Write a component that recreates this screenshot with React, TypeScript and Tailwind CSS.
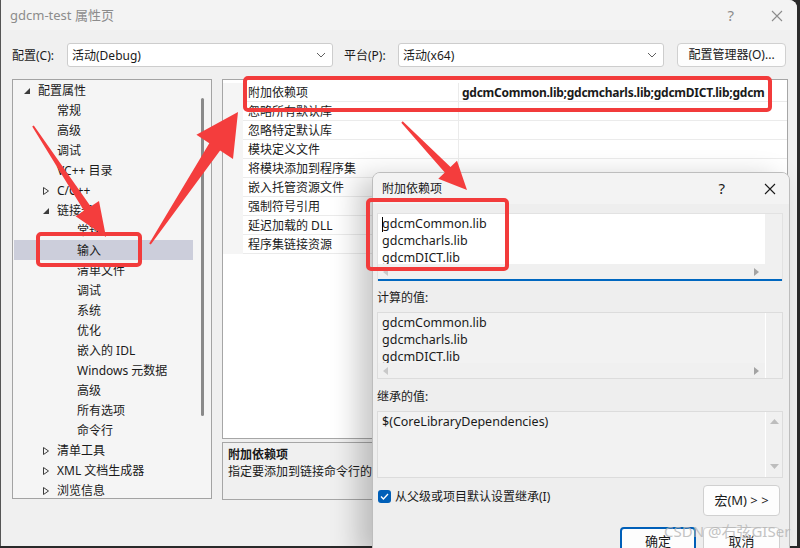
import React from 'react';

type TreeItem = { label: string; level: 0 | 1 | 2; tri?: 'open' | 'closed'; selected?: boolean };

const tree: TreeItem[] = [
  { label: '配置属性', level: 0, tri: 'open' },
  { label: '常规', level: 1 },
  { label: '高级', level: 1 },
  { label: '调试', level: 1 },
  { label: 'VC++ 目录', level: 1 },
  { label: 'C/C++', level: 1, tri: 'closed' },
  { label: '链接器', level: 1, tri: 'open' },
  { label: '常规', level: 2 },
  { label: '输入', level: 2, selected: true },
  { label: '清单文件', level: 2 },
  { label: '调试', level: 2 },
  { label: '系统', level: 2 },
  { label: '优化', level: 2 },
  { label: '嵌入的 IDL', level: 2 },
  { label: 'Windows 元数据', level: 2 },
  { label: '高级', level: 2 },
  { label: '所有选项', level: 2 },
  { label: '命令行', level: 2 },
  { label: '清单工具', level: 1, tri: 'closed' },
  { label: 'XML 文档生成器', level: 1, tri: 'closed' },
  { label: '浏览信息', level: 1, tri: 'closed' },
];

const props = [
  '附加依赖项',
  '忽略所有默认库',
  '忽略特定默认库',
  '模块定义文件',
  '将模块添加到程序集',
  '嵌入托管资源文件',
  '强制符号引用',
  '延迟加载的 DLL',
  '程序集链接资源',
];

const libs = ['gdcmCommon.lib', 'gdcmcharls.lib', 'gdcmDICT.lib'];

// tapered arrow polygon, tail -> tip
function arrow(tx: number, ty: number, px: number, py: number, w0: number, w1: number, hl: number, hw: number) {
  const dx = px - tx;
  const dy = py - ty;
  const len = Math.hypot(dx, dy);
  const ux = dx / len;
  const uy = dy / len;
  const nx = -uy;
  const ny = ux;
  const bx = px - ux * hl;
  const by = py - uy * hl;
  const pts = [
    [tx + (nx * w0) / 2, ty + (ny * w0) / 2],
    [bx + (nx * w1) / 2, by + (ny * w1) / 2],
    [bx + (nx * hw) / 2, by + (ny * hw) / 2],
    [px, py],
    [bx - (nx * hw) / 2, by - (ny * hw) / 2],
    [bx - (nx * w1) / 2, by - (ny * w1) / 2],
    [tx - (nx * w0) / 2, ty - (ny * w0) / 2],
  ];
  return pts.map((p) => p.map((v) => v.toFixed(1)).join(',')).join(' ');
}

function Chevron() {
  return (
    <svg width="10" height="6" viewBox="0 0 10 6" className="shrink-0">
      <path d="M1 1 L5 5 L9 1" fill="none" stroke="#606060" strokeWidth="1" />
    </svg>
  );
}

function CloseX({ color }: { color: string }) {
  return (
    <svg width="12" height="12" viewBox="0 0 12 12">
      <path d="M1 1 L11 11 M11 1 L1 11" stroke={color} strokeWidth="1.1" />
    </svg>
  );
}

function Tri({ kind }: { kind?: 'open' | 'closed' }) {
  if (kind === 'open')
    return (
      <svg width="6" height="6" viewBox="0 0 6 6">
        <path d="M6 0 L6 6 L0 6 Z" fill="#3c3c3c" />
      </svg>
    );
  if (kind === 'closed')
    return (
      <svg width="6" height="8" viewBox="0 0 6 8">
        <path d="M0.5 0.5 L5.5 4 L0.5 7.5 Z" fill="none" stroke="#3c3c3c" strokeWidth="1" />
      </svg>
    );
  return null;
}

function ArrowL({ c }: { c: string }) {
  return (
    <svg width="5" height="8" viewBox="0 0 5 8">
      <path d="M5 0 L0 4 L5 8 Z" fill={c} />
    </svg>
  );
}
function ArrowR({ c }: { c: string }) {
  return (
    <svg width="5" height="8" viewBox="0 0 5 8">
      <path d="M0 0 L5 4 L0 8 Z" fill={c} />
    </svg>
  );
}
function ArrowU({ c }: { c: string }) {
  return (
    <svg width="9" height="5" viewBox="0 0 9 5">
      <path d="M0 5 L4.5 0 L9 5 Z" fill={c} />
    </svg>
  );
}
function ArrowD({ c }: { c: string }) {
  return (
    <svg width="9" height="5" viewBox="0 0 9 5">
      <path d="M0 0 L4.5 5 L9 0 Z" fill={c} />
    </svg>
  );
}

export default function App() {
  return (
    <div className="relative w-[800px] h-[548px] overflow-hidden bg-[#2a2a2a] font-[family-name:Noto_Sans,Noto_Sans_CJK_SC,sans-serif] text-[#1a1a1a]">
      {/* main property window */}
      <div className="w-[797px] h-[546px] bg-[#f0f0f0] border-l border-[#555] rounded-tr-[8px] flex flex-col">
        <div className="h-[30px] pt-[1px] bg-[#f3f3f3] rounded-tr-[8px] flex items-center pl-[9px] text-[13px] text-[#8c8c8c]">
          <span>gdcm-test 属性页</span>
          <div className="ml-auto flex items-center">
            <span className="text-[15px] mr-[37px]">?</span>
            <span className="mr-[14px]">
              <CloseX color="#8c8c8c" />
            </span>
          </div>
        </div>

        {/* configuration row */}
        <div className="mt-[13px] h-[24px] flex items-center pl-[11px] text-[12px]">
          <span className="w-[55px] pt-[1px]">配置(C):</span>
          <div className="w-[266px] h-[24px] bg-white border border-[#cdcdcd] rounded-[3px] flex items-center pl-[4px] pr-[6px]">
            <span className="flex-1 pt-[1px]">活动(Debug)</span>
            <Chevron />
          </div>
          <span className="ml-[11px] w-[54px] pt-[1px]">平台(P):</span>
          <div className="w-[266px] h-[24px] bg-white border border-[#cdcdcd] rounded-[3px] flex items-center pl-[4px] pr-[6px]">
            <span className="flex-1 pt-[1px]">活动(x64)</span>
            <Chevron />
          </div>
          <button className="ml-[13px] w-[109px] h-[24px] bg-[#fdfdfd] border border-[#d0d0d0] rounded-[4px] text-[12px]">
            配置管理器(O)...
          </button>
        </div>

        {/* main area */}
        <div className="mt-[12px] h-[421px] flex pl-[11px]">
          {/* tree */}
          <div className="w-[200px] h-[420px] border border-[#a3a3a3] bg-[#f5f5f5] flex overflow-hidden text-[12px]">
            <div className="w-[179px] ml-[1px] flex flex-col">
              {tree.map((t, i) => (
                <div
                  key={i}
                  className={`h-[20px] shrink-0 flex items-center pt-[2px] ${t.selected ? 'bg-[#cccedb]' : ''} ${
                    t.level === 0 ? 'pl-[10px]' : t.level === 1 ? 'pl-[29px]' : 'pl-[49px]'
                  }`}
                >
                  <div className="w-[14px] flex items-center">
                    <Tri kind={t.tri} />
                  </div>
                  <span className="whitespace-nowrap">{t.label}</span>
                </div>
              ))}
            </div>
            <div className="flex-1 pl-[8px] pt-[18px]">
              <div className="w-[3px] h-[318px] bg-[#8a8a8a] rounded-[2px]" />
            </div>
          </div>

          {/* property grid + description */}
          <div className="ml-[10px] w-[566px] flex flex-col">
            <div className="h-[360px] border border-[#a6a6a6] bg-white pt-[3px] text-[12px]">
              {props.map((p, i) => (
                <div key={i} className="h-[19px] flex">
                  <div className="w-[20px] bg-[#f5f5f5]" />
                  <div className="flex-1 flex border-b border-[#ebebeb]">
                    <div className="w-[215px] pl-[5px] pt-[1px] flex items-center whitespace-nowrap">{p}</div>
                    <div className="flex-1 border-l border-[#ebebeb] pl-[3px] pt-[1px] flex items-center whitespace-nowrap overflow-hidden font-bold text-[12px] tracking-[-0.25px]">
                      {i === 0 ? 'gdcmCommon.lib;gdcmcharls.lib;gdcmDICT.lib;gdcm' : ''}
                    </div>
                  </div>
                </div>
              ))}
            </div>
            <div className="mt-[3px] h-[58px] border border-[#a6a6a6] pl-[5px] pt-[3px] text-[12px] leading-[17px]">
              <div className="font-bold">附加依赖项</div>
              <div>指定要添加到链接命令行的附加项。</div>
            </div>
          </div>
        </div>
      </div>

      {/* dialog */}
      <div className="absolute left-[372px] top-[172px] w-[418px] h-[380px] bg-[#eeeeee] border border-[#bdbdbd] rounded-t-[8px] overflow-hidden shadow-[-14px_6px_28px_rgba(0,0,0,0.22)]">
        <div className="h-[31px] bg-[#f3f3f3] flex items-center pl-[9px] text-[12px]">
          <span>附加依赖项</span>
          <div className="ml-auto flex items-center">
            <span className="text-[15px] mr-[39px]">?</span>
            <span className="mr-[13px]">
              <CloseX color="#1a1a1a" />
            </span>
          </div>
        </div>

        <div className="pl-[4px] pr-[6px]">
          {/* editable box */}
          <div className="mt-[9px] border-x border-t border-[#e2e2e2]">
            <div className="flex h-[65px]">
              <div className="flex-1 flex flex-col">
                <div className="relative h-[50px] bg-white pl-[4px] pt-[1px] text-[12.5px] leading-[17px] overflow-hidden">
                  <span className="absolute left-[4px] top-[3px] w-[1px] h-[15px] bg-black" />
                  {libs.map((l) => (
                    <div key={l}>{l}</div>
                  ))}
                </div>
                <div className="h-[15px] bg-[#f0f0f0] flex items-center justify-between pl-[5px] pr-[6px]">
                  <ArrowL c="#c9c9c9" />
                  <ArrowR c="#a3a3a3" />
                </div>
              </div>
              <div className="w-[17px] bg-[#f0f0f0]" />
            </div>
            <div className="h-[2px] bg-[#0067c0]" />
          </div>

          <div className="mt-[9px] h-[16px] flex items-center text-[12px]">计算的值:</div>

          {/* evaluated box */}
          <div className="mt-[6px] h-[67px] border border-[#dcdcdc] flex">
            <div className="flex-1 flex flex-col">
              <div className="h-[50px] bg-[#f2f2f2] pl-[4px] pt-[1px] text-[12.5px] leading-[17px] overflow-hidden">
                {libs.map((l) => (
                  <div key={l}>{l}</div>
                ))}
              </div>
              <div className="h-[15px] bg-[#f0f0f0] flex items-center justify-between pl-[5px] pr-[6px]">
                <ArrowL c="#c9c9c9" />
                <ArrowR c="#a3a3a3" />
              </div>
            </div>
            <div className="w-[17px] bg-[#f0f0f0] border-l border-white" />
          </div>

          <div className="mt-[10px] h-[16px] flex items-center text-[12px]">继承的值:</div>

          {/* inherited box */}
          <div className="mt-[6px] h-[67px] border border-[#dcdcdc] flex">
            <div className="flex-1 bg-[#f2f2f2] pl-[4px] pt-[1px] text-[12.5px] leading-[17px]">
              $(CoreLibraryDependencies)
            </div>
            <div className="w-[17px] bg-[#f0f0f0] border-l border-white flex flex-col items-center justify-between pt-[7px] pb-[8px]">
              <ArrowU c="#bdbdbd" />
              <ArrowD c="#bdbdbd" />
            </div>
          </div>

          {/* inherit checkbox + macros */}
          <div className="mt-[7px] h-[31px] flex items-start pr-[3px]">
            <div className="mt-[5px] ml-[1px] w-[13px] h-[13px] rounded-[3px] bg-[#005fb8] flex items-center justify-center">
              <svg width="9" height="7" viewBox="0 0 9 7">
                <path d="M1 3.5 L3.4 6 L8 1" fill="none" stroke="white" strokeWidth="1.3" />
              </svg>
            </div>
            <span className="mt-[3px] ml-[4px] text-[12px] leading-[17px]">从父级或项目默认设置继承(I)</span>
            <button className="ml-auto w-[77px] h-[31px] bg-[#fdfdfd] border border-[#d0d0d0] rounded-[4px] text-[13px]">
              宏(M) &gt; &gt;
            </button>
          </div>

          <div className="mt-[11px] flex justify-end gap-[7px] pr-[3px]">
            <button className="w-[76px] h-[30px] bg-[#fdfdfd] border-2 border-[#005fb8] rounded-[4px] text-[13px]">确定</button>
            <button className="w-[77px] h-[30px] bg-[#fdfdfd] border border-[#d0d0d0] rounded-[4px] text-[13px]">取消</button>
          </div>
        </div>
      </div>

      {/* watermark */}
      <div className="absolute left-[664px] top-[520px] text-[15px] text-[#b5b5b5] opacity-80 whitespace-nowrap">
        CSDN @右弦GISer
      </div>

      {/* red annotation boxes */}
      <div className="absolute left-[36px] top-[232px] w-[106px] h-[35px] border-[4px] border-[#f23b3b] rounded-[5px]" />
      <div className="absolute left-[243px] top-[76px] w-[529px] h-[36px] border-[4px] border-[#f23b3b] rounded-[5px]" />
      <div className="absolute left-[366px] top-[198px] w-[143px] h-[73px] border-[4px] border-[#f23b3b] rounded-[5px]" />

      {/* red arrows */}
      <svg className="absolute left-0 top-0 pointer-events-none" width="800" height="548">
        <polygon points={arrow(33, 126, 106, 237, 2, 8, 34, 28)} fill="#f43d3d" />
        <polygon points={arrow(150, 244, 238, 112, 2, 13, 42, 44)} fill="#f43d3d" />
        <polygon points={arrow(402, 122, 467, 190, 2, 8, 28, 26)} fill="#f43d3d" />
      </svg>
    </div>
  );
}
